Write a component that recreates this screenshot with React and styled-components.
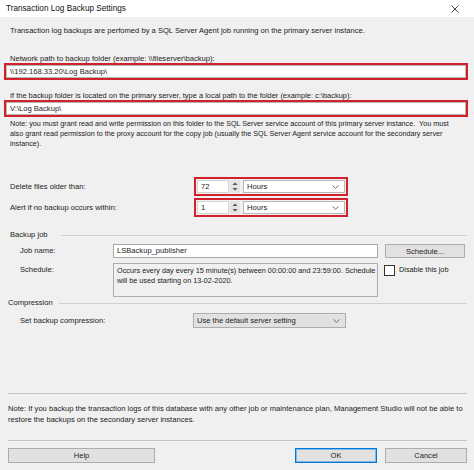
import styled, { createGlobalStyle } from "styled-components";

const GlobalStyle = createGlobalStyle`
  html, body {
    margin: 0;
    padding: 0;
    background: #f0f0f0;
  }
`;

const RED = "#d3202d";

// Window frame

const Window = styled.div`
  width: 474px;
  height: 470px;
  display: flex;
  flex-direction: column;
  background: #f0f0f0;
  color: #222;
  font-family: "Liberation Sans", Arial, sans-serif;
  font-size: 7.6px;
  overflow: hidden;
`;

const TitleBar = styled.div`
  flex: none;
  height: 17px;
  display: flex;
  align-items: center;
  justify-content: space-between;
  padding: 0 15px 0 6px;
  background: #fff;
  font-size: 8.2px;
  color: #111;
`;

const Body = styled.div`
  flex: 1;
  display: flex;
  flex-direction: column;
  padding: 0 6px 0 4px;
`;

const Text = styled.div`
  margin-top: ${(p) => p.$top ?? 0}px;
  padding-left: ${(p) => p.$indent ?? 6}px;
  font-size: ${(p) => (p.$size ? `${p.$size}px` : "inherit")};
  line-height: ${(p) => p.$lh ?? 10}px;
  white-space: nowrap;
`;

// Red highlight frames

const RedFrame = styled.div`
  display: flex;
  align-items: center;
  gap: ${(p) => p.$gap ?? 0}px;
  margin-top: ${(p) => p.$top ?? 0}px;
  padding: ${(p) => p.$pad ?? 0}px;
  border: 2px solid ${RED};
`;

const PathInput = styled.div`
  flex: 1;
  height: 11px;
  line-height: 11px;
  padding-left: 3px;
  border: 1px solid #b4b4b4;
  background: #fff;
`;

// Spin rows

const SpinRow = styled.div`
  display: grid;
  grid-template-columns: 190px 154px;
  align-items: center;
  margin-top: ${(p) => p.$top ?? 0}px;
`;

const NumberBox = styled.div`
  width: 27px;
  height: 11px;
  line-height: 11px;
  padding-left: 3px;
  border: 1px solid #d4d4d4;
  background: #fff;
`;

const Spinner = styled.div`
  width: 10px;
  height: 13px;
  display: flex;
  align-items: center;
  justify-content: center;
  background: #e4e4e4;
`;

const Combo = styled.div`
  flex: ${(p) => (p.$grow ? 1 : "none")};
  height: ${(p) => p.$h ?? 13}px;
  display: flex;
  align-items: center;
  justify-content: space-between;
  margin-left: ${(p) => p.$ml ?? 0}px;
  padding: 0 5px 0 3px;
  border: 1px solid ${(p) => (p.$flat ? "#adadad" : "#b8b8b8")};
  background: ${(p) => (p.$flat ? "#e1e1e1" : "#fff")};
  box-sizing: border-box;
`;

// Groups

const GroupHeader = styled.div`
  display: grid;
  grid-template-columns: 51px 1fr;
  align-items: center;
  margin-top: ${(p) => p.$top ?? 0}px;
  padding-left: ${(p) => p.$indent ?? 6}px;
  line-height: 10px;
  span {
    white-space: nowrap;
  }
`;

const Rule = styled.div`
  height: 1px;
  margin-right: 1px;
  background: #d0d0d0;
`;

const GroupRow = styled.div`
  display: grid;
  grid-template-columns: ${(p) => p.$cols};
  column-gap: 7px;
  align-items: ${(p) => p.$align ?? "center"};
  margin-top: ${(p) => p.$top ?? 0}px;
  padding-left: 16px;
`;

const FieldLabel = styled.div`
  white-space: nowrap;
  padding-top: ${(p) => p.$pt ?? 0}px;
  line-height: 10px;
`;

const TextField = styled.div`
  height: 12px;
  line-height: 12px;
  padding-left: 3px;
  border: 1px solid #a8a8a8;
  background: #fff;
`;

const ScheduleBox = styled.div`
  height: 28px;
  padding: 2px 3px;
  font-size: 7.3px;
  line-height: 10px;
  border: 1px solid #adadad;
  background: #f0f0f0;
  white-space: nowrap;
`;

const Button = styled.div`
  width: ${(p) => p.$width}px;
  height: ${(p) => p.$h ?? 15}px;
  box-sizing: border-box;
  display: flex;
  align-items: center;
  justify-content: center;
  background: #e1e1e1;
  border: 1px solid ${(p) => (p.$default ? "#0078d7" : "#adadad")};
  box-shadow: ${(p) => (p.$default ? "inset 0 0 0 1px #7fb8e6" : "none")};
`;

const CheckRow = styled.div`
  display: flex;
  align-items: flex-start;
  gap: 4px;
  margin-top: 2px;
  margin-left: -1px;
  font-size: 7.3px;
  line-height: 10px;
  white-space: nowrap;
`;

const CheckBox = styled.div`
  width: 9px;
  height: 9px;
  border: 1px solid #333;
  background: #fff;
`;

// Footer

const Footer = styled.div`
  flex: none;
  padding: 0 7px 7px 8px;
`;

const Separator = styled.div`
  height: 1px;
  margin-top: ${(p) => p.$top ?? 0}px;
  background: #c4c4c4;
`;

const ButtonRow = styled.div`
  display: flex;
  align-items: center;
  gap: 8px;
  margin-top: 7px;
`;

const Spacer = styled.div`
  flex: 1;
`;

const Chevron = () => (
  <svg width="7" height="4" viewBox="0 0 7 4">
    <polyline points="0.5,0.5 3.5,3.3 6.5,0.5" fill="none" stroke="#606060" strokeWidth="0.9" />
  </svg>
);

const SpinArrows = () => (
  <svg width="6" height="11" viewBox="0 0 6 11">
    <polygon points="0.5,4 3,1.5 5.5,4" fill="#555" />
    <polygon points="0.5,7 3,9.5 5.5,7" fill="#555" />
  </svg>
);

const CloseIcon = () => (
  <svg width="8" height="8" viewBox="0 0 8 8">
    <path d="M0.5 0.5 L7.5 7.5 M7.5 0.5 L0.5 7.5" stroke="#333" strokeWidth="0.9" />
  </svg>
);

const Interval = ({ value }) => (
  <RedFrame $pad={1} $gap={1}>
    <NumberBox>{value}</NumberBox>
    <Spinner>
      <SpinArrows />
    </Spinner>
    <Combo $grow $ml={2}>
      Hours
      <Chevron />
    </Combo>
  </RedFrame>
);

export default function App() {
  return (
    <>
      <GlobalStyle />
      <Window>
        <TitleBar>
          <span>Transaction Log Backup Settings</span>
          <CloseIcon />
        </TitleBar>

        <Body>
          <Text $top={9}>
            Transaction log backups are perfomed by a SQL Server Agent job running on the primary server instance.
          </Text>

          <Text $top={18} $lh={9}>
            Network path to backup folder (example: \\fileserver\backup):
          </Text>
          <RedFrame>
            <PathInput>\\192.168.33.20\Log Backup\</PathInput>
          </RedFrame>

          <Text $top={11} $lh={9} $size={7.45}>
            If the backup folder is located on the primary server, type a local path to the folder (example: c:\backup):
          </Text>
          <RedFrame>
            <PathInput>V:\Log Backup\</PathInput>
          </RedFrame>
          <Text $top={2} $size={7.2}>
            Note: you must grant read and write permission on this folder to the SQL Server service account of this primary server instance.&nbsp; You must
            <br />
            also grant read permission to the proxy account for the copy job (usually the SQL Server Agent service account for the secondary server
            <br />
            instance).
          </Text>

          <SpinRow $top={28}>
            <Text>Delete files older than:</Text>
            <Interval value="72" />
          </SpinRow>
          <SpinRow $top={2}>
            <Text>Alert if no backup occurs within:</Text>
            <Interval value="1" />
          </SpinRow>

          <GroupHeader $top={13}>
            <span>Backup job</span>
            <Rule />
          </GroupHeader>
          <GroupRow $top={4} $cols="86px 265px 80px">
            <FieldLabel>Job name:</FieldLabel>
            <TextField>LSBackup_publisher</TextField>
            <Button $width={80} $h={14}>
              Schedule...
            </Button>
          </GroupRow>
          <GroupRow $top={5} $cols="86px 265px 80px" $align="start">
            <FieldLabel $pt={2}>Schedule:</FieldLabel>
            <ScheduleBox>
              Occurs every day every 15 minute(s) between 00:00:00 and 23:59:00. Schedule
              <br />
              will be used starting on 13-02-2020.
            </ScheduleBox>
            <CheckRow>
              <CheckBox />
              <span>Disable this job</span>
            </CheckRow>
          </GroupRow>

          <GroupHeader $top={1} $indent={4}>
            <span>Compression</span>
            <Rule />
          </GroupHeader>
          <GroupRow $top={5} $cols="166px 153px">
            <FieldLabel>Set backup compression:</FieldLabel>
            <Combo $flat $h={15}>
              Use the default server setting
              <Chevron />
            </Combo>
          </GroupRow>
        </Body>

        <Footer>
          <Separator />
          <Text $top={9} $lh={11} $indent={0}>
            Note: If you backup the transaction logs of this database with any other job or maintenance plan, Management Studio will not be able to
            <br />
            restore the backups on the secondary server instances.
          </Text>
          <Separator $top={15} />
          <ButtonRow>
            <Button $width={147}>Help</Button>
            <Spacer />
            <Button $width={82} $default>
              OK
            </Button>
            <Button $width={82}>Cancel</Button>
          </ButtonRow>
        </Footer>
      </Window>
    </>
  );
}
